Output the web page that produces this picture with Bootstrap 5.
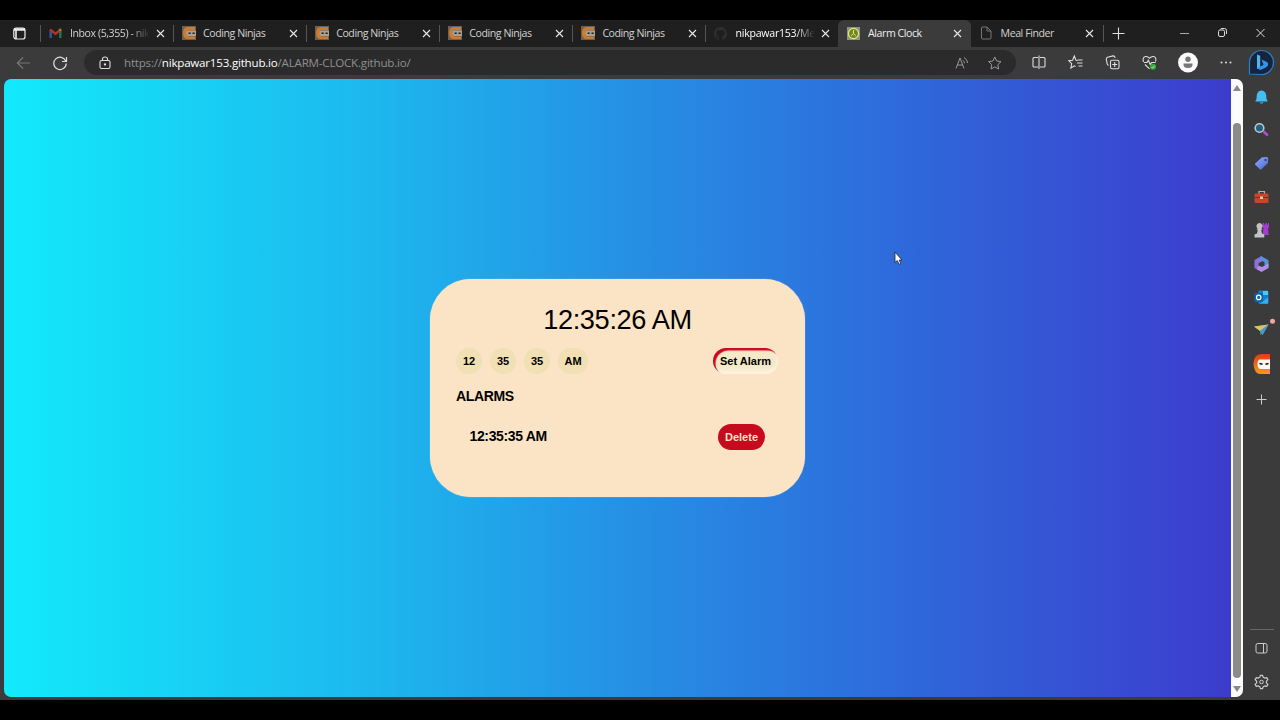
<!DOCTYPE html>
<html lang="en">
<head>
<meta charset="utf-8">
<title>Alarm Clock</title>
<link href="https://cdn.jsdelivr.net/npm/bootstrap@5.3.0/dist/css/bootstrap.min.css" rel="stylesheet">
<style>
body{background:#000;width:1280px;height:720px;overflow:hidden;font-family:"Open Sans","Noto Sans",sans-serif}
svg{display:block;flex:none}
.browser{height:680px;margin-top:20px;background:#3b3b3b}
.tabstrip{height:26.5px;background:#1f1f1f;flex:none}
.lead-cell{width:39.5px;padding-left:13px}
.tab{width:133.1px;border-left:1px solid transparent;padding-left:8.5px;position:relative;color:#d2d2d2;font-size:10.6px;letter-spacing:-.44px;white-space:nowrap}
.tab.sep::before,.newtab::before{content:"";position:absolute;left:-1px;top:5px;height:17px;width:1px;background:#555}
.tab .ico{width:14px;margin-right:7px;flex:none}
.tab .ttl{width:80px;overflow:hidden;line-height:16px;flex:none}
.tab .fade-end{-webkit-mask-image:linear-gradient(90deg,#000 75%,transparent 100%);mask-image:linear-gradient(90deg,#000 75%,transparent 100%)}
.tab .x{margin-left:6px}
.tab.on{background:#3b3b3b;border-radius:6px 6px 0 0;color:#eee;width:132.5px;padding-left:8px}
.tab.on .x{margin-left:5px}
.tab.on+.tab{padding-left:8px}
.tab.on+.tab .x{margin-left:4.5px}
.tab.bright{color:#fff;letter-spacing:-.25px}
.newtab{position:relative;width:61px;padding-left:8px}
.toolbar{height:32px;flex:none;padding-left:16px}
.address{width:933px;height:25px;border-radius:13px;background:#2b2b2b;margin-left:15.500px;padding:0 14px 0 15.5px;font-size:11.6px;color:#8f8f8f;letter-spacing:-.22px}
.address b{font-weight:400;color:#fff}
.url{padding-left:5px}
.tools{flex:1;position:relative}
.view{flex:1;min-height:0}
.page{width:1227px;height:618px;margin-left:3.5px;margin-top:.5px;border-radius:7px 0 0 7px;background:linear-gradient(90deg,#12eafb 0%,#1bc0f0 25%,#2592e5 50%,#2f66da 75%,#3c3ccd 100%)}
.scroller{width:12.5px;height:618px;margin-top:.5px;background:#fbfbfb;border-radius:0 7px 7px 0;padding:6px 0 5px}
.thumb{width:7.5px;height:555px;margin-top:32px;border-radius:4px;background:#8a8a88}
.side{flex:1;padding:10px 0 0}
.side>*{margin-left:auto;margin-right:auto}
.clock{width:375px;height:218px;border-radius:41px;background:#fbe4c6;margin-left:0;margin-top:-.5px;padding:25px 26.5px 0 26.5px;color:#000;font-family:"Liberation Sans",Arial,sans-serif;position:relative;box-shadow:0 0 1px #fbe4c6}
.time{font-size:27.2px;line-height:31px;margin-bottom:13.5px;padding-left:1px;letter-spacing:-.36px}
.pill{background:#f0e0b4;border-radius:14px;height:26px;min-width:26px;padding:0 6.5px;font-weight:700;font-size:11px;line-height:26px;text-align:center}
.set{width:65px;padding:0;background:linear-gradient(#f7e9c9,#f0e8c6 65%,#fdf0df);box-shadow:inset 2.5px 2.5px 1px #cb0820,inset -1px -2px 3px #fff3dc;white-space:nowrap;border:0}
.del{width:47px;padding:0;background:#c60b1e;color:#fbe4c6;border:0}
.heading{font-size:14px;letter-spacing:-.35px;font-weight:700;line-height:16px;margin:13.5px 0 0}
.entry{font-size:14px;letter-spacing:-.35px;font-weight:700;margin-top:20px;padding:0 13px 0 13.5px}
.entry .pill{letter-spacing:0}
.pointer{position:absolute;left:894px;top:251px}
</style>
</head>
<body>
<svg width="0" height="0" style="position:absolute">
<defs>
<linearGradient id="tg" x1="0" y1="0" x2="1" y2="1"><stop stop-color="#8fb2fb"/><stop offset="1" stop-color="#4f5fd6"/></linearGradient>
<linearGradient id="or" x1="0" y1="0" x2="0" y2="1"><stop stop-color="#e53a12"/><stop offset="1" stop-color="#f59a20"/></linearGradient>
<symbol id="x" viewBox="0 0 9 9"><path d="M1 1l7 7M8 1l-7 7" stroke="#e8e8e8" stroke-width="1.1" fill="none"/></symbol>
<symbol id="ninja" viewBox="0 0 14 14"><path fill="#67625b" d="M0 0h14v14H0z"/><path d="M13 1H6Q1 1 1 7t5 6h7v-2.500H7Q5 10.500 5 7t2-3h6z" fill="#d17a29"/><path d="M5 4.500h9v5.500H6Q4.500 10 4.500 7.200T6 4.500z" fill="#aaa194"/><path d="M6.500 7.200h2.200M10.500 7.200h2.200" stroke="#222" stroke-width="1.500"/></symbol>
</defs></svg>

<div class="browser d-flex flex-column">
  <div class="tabstrip d-flex align-items-stretch">
    <div class="lead-cell d-flex align-items-center"><svg width="13" height="13" viewBox="0 0 13 13" fill="none" stroke="#eee"><rect x=".8" y="1" width="11.200" height="11" rx="2.300" stroke-width="1.200"/><path d="M1 2.500h11" stroke-width="2.500"/><path d="M3 3v9" stroke-width="1.600"/></svg></div>
    <div class="tab sep d-flex align-items-center"><span class="ico"><svg width="13" height="10" viewBox="0 0 13 10" fill="none" stroke-width="2.400"><path d="M1.700 10V2" stroke="#34579c"/><path d="M11.300 10V2" stroke="#28724a"/><path d="M1 1.500l5.500 4.300L12 1.500" stroke="#b52f2c"/><path d="M10.300 2.600L12 1.300" stroke="#a48623"/></svg></span><span class="ttl fade-end">Inbox (5,355) - nik</span><svg class="x" width="9" height="9"><use href="#x"/></svg></div>
    <div class="tab sep d-flex align-items-center"><span class="ico"><svg width="14" height="14"><use href="#ninja"/></svg></span><span class="ttl">Coding Ninjas</span><svg class="x" width="9" height="9"><use href="#x"/></svg></div>
    <div class="tab sep d-flex align-items-center"><span class="ico"><svg width="14" height="14"><use href="#ninja"/></svg></span><span class="ttl">Coding Ninjas</span><svg class="x" width="9" height="9"><use href="#x"/></svg></div>
    <div class="tab sep d-flex align-items-center"><span class="ico"><svg width="14" height="14"><use href="#ninja"/></svg></span><span class="ttl">Coding Ninjas</span><svg class="x" width="9" height="9"><use href="#x"/></svg></div>
    <div class="tab sep d-flex align-items-center"><span class="ico"><svg width="14" height="14"><use href="#ninja"/></svg></span><span class="ttl">Coding Ninjas</span><svg class="x" width="9" height="9"><use href="#x"/></svg></div>
    <div class="tab sep bright d-flex align-items-center"><span class="ico"><svg width="13" height="13" viewBox="0 0 16 16" fill="#2c3031"><path d="M8 0C3.580 0 0 3.580 0 8c0 3.540 2.290 6.530 5.470 7.590.4.070.550-.170.550-.380 0-.190-.010-.820-.010-1.490-2.010.370-2.530-.490-2.690-.940-.090-.230-.480-.940-.820-1.130-.280-.150-.680-.520-.010-.530.630-.010 1.080.580 1.230.820.720 1.210 1.870.870 2.330.660.070-.520.280-.870.510-1.070-1.780-.200-3.640-.890-3.640-3.950 0-.870.310-1.590.820-2.150-.080-.200-.360-1.020.080-2.120 0 0 .670-.210 2.200.820a7.420 7.420 0 0 1 4 0c1.530-1.040 2.200-.820 2.200-.820.440 1.100.160 1.920.080 2.120.510.560.820 1.270.820 2.150 0 3.070-1.870 3.750-3.650 3.950.290.250.540.730.540 1.480 0 1.070-.010 1.930-.010 2.200 0 .210.150.460.550.380A8.010 8.010 0 0 0 16 8c0-4.420-3.580-8-8-8z"/></svg></span><span class="ttl fade-end">nikpawar153/Mea</span><svg class="x" width="9" height="9"><use href="#x"/></svg></div>
    <div class="tab on d-flex align-items-center"><span class="ico"><svg width="13" height="13" viewBox="0 0 13 13"><path fill="#8f9287" d="M0 0h13v13H0z"/><circle cx="6.500" cy="6.500" r="5.100" fill="#75832c" stroke="#dced6a" stroke-width="1.200"/><path d="M6.500 3v3.500L4.200 8.700M6.500 6.500L8.800 8.700" stroke="#e7f58e" stroke-width=".9" fill="none"/></svg></span><span class="ttl">Alarm Clock</span><svg class="x" width="9" height="9"><use href="#x"/></svg></div>
    <div class="tab d-flex align-items-center"><span class="ico"><svg width="12" height="14" viewBox="0 0 12 14" fill="none" stroke="#777"><path d="M2.500 1H7l4 4v7q0 1-1 1H2.500q-1 0-1-1V2q0-1 1-1zM7 1v4h4"/></svg></span><span class="ttl">Meal Finder</span><svg class="x" width="9" height="9"><use href="#x"/></svg></div>
    <div class="newtab d-flex align-items-center"><svg width="13" height="13" viewBox="0 0 13 13" stroke="#ddd" stroke-width="1.100"><path d="M6.500 .5v12M.5 6.500h12"/></svg></div>
    <div class="d-flex align-items-center ms-auto"><svg width="106" height="14" viewBox="1174 26 106 14" fill="none" stroke="#ddd"><path d="M1180 33.500h9" stroke="#aaa"/><rect x="1218.500" y="30" width="6" height="6.500" rx="1.500"/><path d="M1220.500 29.500q0-1 1.500-1h2.500q2 0 2 2V34"/><path d="M1256.500 29l8 8M1264.500 29l-8 8"/></svg></div>
  </div>

  <div class="toolbar d-flex align-items-center">
    <svg width="52" height="16" viewBox="16 54 52 16" fill="none" stroke="#ddd" stroke-width="1.200"><path d="M30 62H17.500M23 56.500L17.300 62l5.700 5.500" stroke="#777"/><path d="M65.800 60.200A6.200 6.200 0 1 0 66.200 62.500M66.500 56v4.500H62"/></svg>
    <div class="address d-flex align-items-center">
      <svg width="12" height="14" viewBox="0 0 12 14" fill="none" stroke="#ddd" stroke-width="1.100"><rect x="1" y="4.500" width="10" height="8" rx="1.500"/><path d="M3.500 4.500V3q0-2 2.500-2t2.500 2v1.500"/><circle cx="6" cy="8.500" r=".6" fill="#ddd"/></svg>
      <span class="url ms-2">https://<b>nikpawar153.github.io</b>/ALARM-CLOCK.github.io/</span>
      <svg class="ms-auto" width="48" height="16" viewBox="955 54 48 16" fill="none" stroke="#999"><path d="M957 67.500l4-10.500 4 10.500M958.300 64h5.400M964 59.300q1.300 1 1.500 3M965 56.500q3.300 1.800 3.700 5.500"/><path d="M995.800 56l1.900 4 4.300.6-3.100 3 .7 4.400-3.800-2.100-3.800 2.100.7-4.400-3.100-3 4.300-.6z"/></svg>
    </div>
    <div class="tools"><svg width="264" height="30" viewBox="1016.500 48 264 30" fill="none" stroke="#ddd" stroke-width="1.100">
      <path d="M1038.500 57.500h-4q-1 0-1 1v7.500q0 1 1 1h4M1040.500 57.500h4q1 0 1 1v7.500q0 1-1 1h-4M1039.500 55.500v13.500"/>
      <path d="M1078 60.500l-1.500-.2-1.700-4.300-1.700 4.200-3.800.5 2.900 2.900-.8 4.400 3.400-2.200 1.300.8M1078 60h5M1077.500 63h5.500M1079 66h4"/>
      <rect x="1111" y="60.300" width="8.500" height="8.500" rx="1.500"/><path d="M1115.200 62v5M1112.700 64.500h5M1109 65.500q-1-.7-1.300-1.700l-.9-4.500q-.2-1.500 1.200-2l5.500-1.400q1.500-.2 2.200 2"/>
      <path d="M1144 62q-1.500-4.500 2-5.500 2.200-.4 4 1.700 1.800-2.100 4-1.700 3.400 1 2 5M1144.500 62.500h3l1.300-2.300 2 4.300 1.300-2h4M1145.500 64.500l4.500 4.300"/><circle cx="1153.500" cy="66.800" r="3" fill="#35ad38" stroke="none"/><path d="M1152 67l1.100 1.100 2-2.300" stroke-width=".8"/>
      <circle cx="1188.500" cy="62.500" r="10" fill="#fafafa" stroke="none"/><circle cx="1188.500" cy="59.300" r="2.700" fill="#777" stroke="none"/><path d="M1184 63.500h9q.5 4.500-4.500 4.500t-4.500-4.500" fill="#777" stroke="none"/>
      <g fill="#ddd" stroke="none"><circle cx="1222" cy="62.500" r="1"/><circle cx="1226.500" cy="62.500" r="1"/><circle cx="1231" cy="62.500" r="1"/></g>
      <path d="M1250 74V62.500a12 12 0 1 1 12 12z" fill="#18233c" stroke="#2b7fc3" stroke-width="1.200"/><path d="M1257.500 54.500l3.200 1.300v11.200l-3.200 2z" fill="#4db6ee" stroke="none"/><path d="M1262 59.500l5.500 2.600q1.800 1.200 1 3.200-1.200 2.500-7.700 4.700l-3.300-1.500 6.500-3.800z" fill="#2f95ef" stroke="none"/></svg></div>
  </div>

  <div class="view d-flex">
    <main class="page d-flex align-items-center justify-content-center">
      <section class="clock">
        <div class="time text-center">12:35:26 AM</div>
        <div class="d-flex align-items-center">
          <div class="pill">12</div><div class="pill ms-2">35</div><div class="pill ms-2">35</div><div class="pill ms-2">AM</div>
          <button class="pill set ms-auto">Set Alarm</button>
        </div>
        <h2 class="heading">ALARMS</h2>
        <div class="entry d-flex align-items-center justify-content-between"><span>12:35:35 AM</span><button class="pill del">Delete</button></div>
      </section>
    </main>
    <div class="scroller d-flex flex-column align-items-center">
      <svg width="8" height="6" viewBox="0 0 8 6"><path d="M0 6l4-6 4 6z" fill="#888"/></svg>
      <div class="thumb"></div>
      <svg class="mt-auto" width="8" height="6" viewBox="0 0 8 6"><path d="M0 0h8L4 6z" fill="#888"/></svg>
    </div>
    <aside class="side">
      <svg width="34" height="610" viewBox="1245 89 34 610">
        <path d="M1256.500 99q-.3-8.500 5-8.500t5 8.500l1.300 2.500h-12.600z" fill="#46bdf0"/><path d="M1259.500 102h4q-.5 2-2 2t-2-2" fill="#2588d8"/>
        <path d="M1263.500 131.500l4.300 4" stroke="#b14bd8" stroke-width="2.600"/><circle cx="1259.500" cy="128" r="4.300" fill="#26607f" stroke="#b9c9d4" stroke-width="1.600"/>
        <path d="M1262 157.300l5-.3 1.200 1-.3 5-6.500 6.300q-.8.500-1.500 0l-4.700-4.500q-.5-.8 0-1.400z" fill="url(#tg)"/><circle cx="1265.500" cy="160" r="1.100" fill="#333"/>
        <path d="M1259 194v-2.500h5.500v2.500" fill="none" stroke="#c4a99c" stroke-width="1.200"/><rect x="1254.500" y="193.500" width="14" height="9.500" rx="1.200" fill="#c94528"/><path d="M1254.500 197.500h14" stroke="#842a18"/><path d="M1260 196.500h3v2.500h-3z" fill="#ecc9ae"/>
        <path d="M1262.500 223h1.500v1.500h1.500V223h1.500v1.500h1V223h1v4l-1 1 .7 7h-6l.7-7-.9-1z" fill="#a53ed0"/><path d="M1254.500 237.500v-3l2.500-1 .8-3.500-1.200-.8 1-1a2.900 2.900 0 1 1 3.800 0l1 1-1.200.8.8 3.500 2.300 1v3z" fill="#c1c3c5"/>
        <path d="M1261.500 256l-7 4v8l4 2.300v-7l5.500-3z" fill="#8d72d9"/><path d="M1261 256l7.500 4.200v7.300l-4-2.300v-3l-5-2.700z" fill="#5792df"/><path d="M1258.500 265.500l3.500 1.500 6.500-3.500v4.500l-7 4-4.500-2.500z" fill="#b58de9"/>
        <path d="M1258.500 290.500h8.500q1.500 0 1.500 1.500v10.500q0 1.500-1.500 1.500h-8.500z" fill="#167dc8"/><path d="M1263 291h5v4h-5z" fill="#54c5ef"/><path d="M1260 303.500l8-6v6z" fill="#38afe8"/><rect x="1254.500" y="293" width="8.500" height="9" rx="1" fill="#0864ad"/><circle cx="1258.700" cy="297.400" r="2.200" fill="none" stroke="#fff" stroke-width="1.200"/>
        <path d="M1254 326.500l14.500-2-6 10.500-2.500-4z" fill="#4b9ddd"/><path d="M1254 326.500l14.500-2-8.500 6.500z" fill="#d8c65a"/><path d="M1260 331l8.500-6.500-6 10.500z" fill="#4b93db"/><path d="M1260 331l.5 4 1.500-1z" fill="#48a568"/><circle cx="1272.500" cy="321.300" r="2.500" fill="#f0a7a2"/>
        <path d="M1270 354h-9q-7 0-7.500 10 .5 10 7.500 10h9z" fill="url(#or)"/><path d="M1270 359.500h-10q-2.500 0-2.500 4.500t2.500 5h10z" fill="#fff8ef"/><path d="M1259.500 363.500l3 .8M1268.500 363.500l-3 .8" stroke="#111" stroke-width="1.600"/>
        <g fill="none" stroke="#ccc"><path d="M1261.500 394.500v10M1256.500 399.500h10"/><path d="M1250 629.500h24" stroke="#666"/><rect x="1256" y="643.500" width="11" height="9.500" rx="1.800"/><path d="M1263.500 643.500v9.500"/>
        <path d="M1260.400 675.300h2.200l.6 2 1.400.8 2.100-.5 1.200 2-1.500 1.500v1.800l1.500 1.500-1.200 2-2.100-.5-1.400.8-.6 2h-2.200l-.6-2-1.400-.8-2.100.5-1.200-2 1.500-1.500v-1.800l-1.500-1.500 1.200-2 2.100.5 1.400-.8z" stroke-width="1.200" stroke-linejoin="round"/><circle cx="1261.500" cy="682" r="1.800"/></g>
      </svg>
    </aside>
  </div>
</div>
<svg class="pointer" width="10" height="15" viewBox="0 0 10 15"><path d="M1 1v10.500l2.300-2 1.700 3.800 1.800-.8L5.200 9H8z" fill="#fff" stroke="#222" stroke-width=".8"/></svg>
<script src="https://cdn.jsdelivr.net/npm/bootstrap@5.3.0/dist/js/bootstrap.bundle.min.js"></script>
</body>
</html>
